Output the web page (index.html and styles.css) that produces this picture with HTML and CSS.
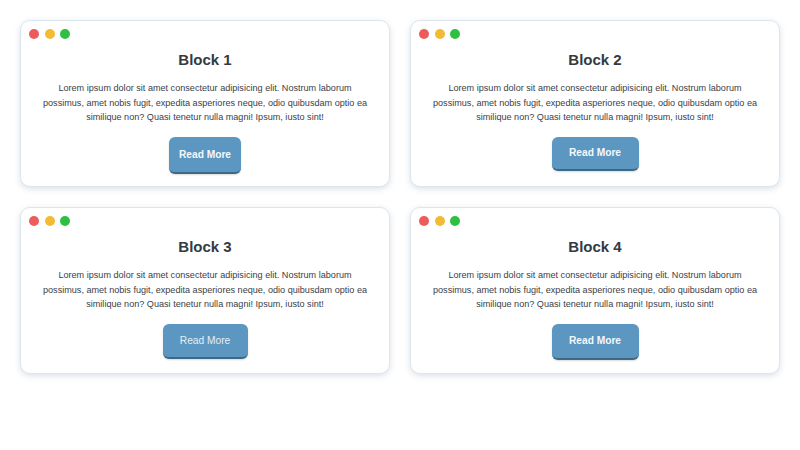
FILE: index.html
```html
<!DOCTYPE html>
<html>
<head>
<meta charset="utf-8">
<link rel="stylesheet" href="styles.css">
</head>
<body>
<div class="grid">
  <div class="card">
    <div class="dots"><span class="dot red"></span><span class="dot yellow"></span><span class="dot green"></span></div>
    <h2 class="title">Block 1</h2>
    <p class="text">Lorem ipsum dolor sit amet consectetur adipisicing elit. Nostrum laborum possimus, amet nobis fugit, expedita asperiores neque, odio quibusdam optio ea similique non? Quasi tenetur nulla magni! Ipsum, iusto sint!</p>
    <div class="actions"><button class="btn btn-1">Read More</button></div>
  </div>
  <div class="card">
    <div class="dots"><span class="dot red"></span><span class="dot yellow"></span><span class="dot green"></span></div>
    <h2 class="title">Block 2</h2>
    <p class="text">Lorem ipsum dolor sit amet consectetur adipisicing elit. Nostrum laborum possimus, amet nobis fugit, expedita asperiores neque, odio quibusdam optio ea similique non? Quasi tenetur nulla magni! Ipsum, iusto sint!</p>
    <div class="actions"><button class="btn btn-2">Read More</button></div>
  </div>
  <div class="card">
    <div class="dots"><span class="dot red"></span><span class="dot yellow"></span><span class="dot green"></span></div>
    <h2 class="title">Block 3</h2>
    <p class="text">Lorem ipsum dolor sit amet consectetur adipisicing elit. Nostrum laborum possimus, amet nobis fugit, expedita asperiores neque, odio quibusdam optio ea similique non? Quasi tenetur nulla magni! Ipsum, iusto sint!</p>
    <div class="actions"><button class="btn btn-3">Read More</button></div>
  </div>
  <div class="card">
    <div class="dots"><span class="dot red"></span><span class="dot yellow"></span><span class="dot green"></span></div>
    <h2 class="title">Block 4</h2>
    <p class="text">Lorem ipsum dolor sit amet consectetur adipisicing elit. Nostrum laborum possimus, amet nobis fugit, expedita asperiores neque, odio quibusdam optio ea similique non? Quasi tenetur nulla magni! Ipsum, iusto sint!</p>
    <div class="actions"><button class="btn btn-4">Read More</button></div>
  </div>
</div>
</body>
</html>
```

FILE: styles.css
```css
html, body {
  margin: 0;
  padding: 0;
  background: #ffffff;
  font-family: "Liberation Sans", Arial, sans-serif;
}
.grid {
  display: grid;
  grid-template-columns: 370px 370px;
  grid-auto-rows: 1fr;
  gap: 20px;
  padding: 20px;
}
.card {
  background: #fff;
  border: 1px solid #dde6ee;
  border-radius: 10px;
  box-shadow: 0 2px 6px rgba(30, 60, 100, 0.16);
  padding: 8px 18px 12.5px;
  display: flex;
  flex-direction: column;
}
.dots {
  display: flex;
  gap: 5.5px;
  margin-left: -10px;
}
.dot {
  width: 10px;
  height: 10px;
  border-radius: 50%;
  display: block;
}
.red { background: #ee5b5b; }
.yellow { background: #f3bb33; }
.green { background: #2fc043; }
.title {
  margin: 12px 0 0;
  text-align: center;
  font-size: 15px;
  line-height: 18px;
  font-weight: 700;
  color: #333a44;
}
.text {
  margin: 12.25px 0 0;
  text-align: center;
  font-size: 9.1px;
  line-height: 14.5px;
  color: #3a4048;
}
.actions {
  display: flex;
  justify-content: center;
  align-items: flex-start;
  margin-top: 11.75px;
}
.btn {
  font-family: "Liberation Sans", Arial, sans-serif;
  font-size: 10.2px;
  background: #5b97c1;
  color: #f4f8fb;
  border: none;
  border-bottom: 2px solid #3f6885;
  border-radius: 6px;
  font-weight: 700;
  box-shadow: 0 1px 2px rgba(0,0,0,0.15);
  padding: 0;
}
.btn-1 { width: 72px; height: 37px; }
.btn-2 { width: 87px; height: 34px; }
.btn-3 { width: 85px; height: 35px; font-weight: 400; color: #e6eef5; }
.btn-4 { width: 87px; height: 36px; }
```
